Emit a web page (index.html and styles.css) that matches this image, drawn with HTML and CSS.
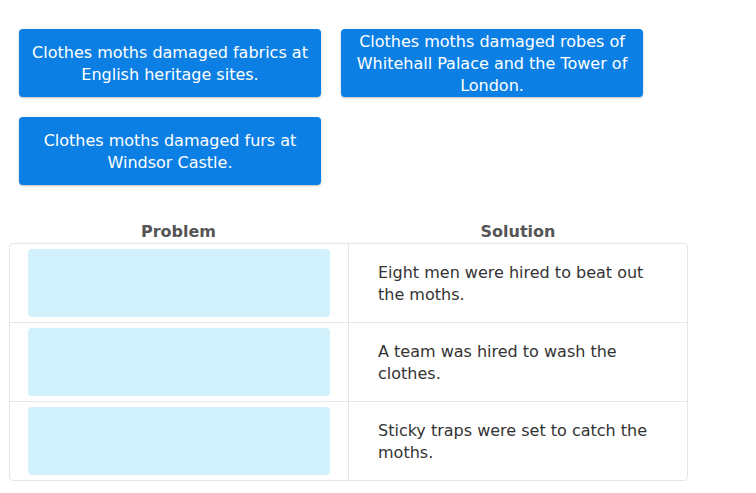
FILE: index.html
```html
<!DOCTYPE html>
<html lang="en">
<head>
<meta charset="utf-8">
<title>Problem and Solution</title>
<link rel="stylesheet" href="styles.css">
</head>
<body>
<div class="page">
  <div class="bank">
    <div class="tile">Clothes moths damaged fabrics at English heritage sites.</div>
    <div class="tile">Clothes moths damaged robes of Whitehall Palace and the Tower of London.</div>
    <div class="tile">Clothes moths damaged furs at Windsor Castle.</div>
  </div>
  <div class="board">
    <div class="heads">
      <div class="head">Problem</div>
      <div class="head">Solution</div>
    </div>
    <div class="table">
      <div class="row">
        <div class="cell drop-cell"><div class="drop"></div></div>
        <div class="cell sol">Eight men were hired to beat out the moths.</div>
      </div>
      <div class="row">
        <div class="cell drop-cell"><div class="drop"></div></div>
        <div class="cell sol">A team was hired to wash the clothes.</div>
      </div>
      <div class="row">
        <div class="cell drop-cell"><div class="drop"></div></div>
        <div class="cell sol">Sticky traps were set to catch the moths.</div>
      </div>
    </div>
  </div>
</div>
</body>
</html>
```

FILE: styles.css
```css
* { box-sizing: border-box; }
html, body { margin: 0; padding: 0; background: #fff; }
body {
  font-family: "DejaVu Sans", "Liberation Sans", sans-serif;
  font-size: 16px;
  line-height: 22px;
  color: #333;
}
.page { padding: 29px 0 0 0; }
.bank {
  display: flex;
  flex-wrap: wrap;
  gap: 20px;
  padding-left: 19px;
  width: 740px;
}
.tile {
  width: 302px;
  height: 68px;
  background: #0b7fe4;
  color: #fff;
  border-radius: 4px;
  box-shadow: 0 1px 2px rgba(0, 0, 0, 0.25);
  display: flex;
  align-items: center;
  justify-content: center;
  text-align: center;
  padding: 2px 8px 0 8px;
}
.board {
  margin: 36px 0 0 9px;
  width: 679px;
}
.heads {
  display: grid;
  grid-template-columns: 339px 340px;
}
.head {
  text-align: center;
  font-weight: bold;
  color: #555;
}
.table {
  border: 1px solid #e6e6e6;
  border-radius: 4px;
}
.row {
  display: grid;
  grid-template-columns: 339px 1fr;
  border-top: 1px solid #e6e6e6;
}
.row:first-child { border-top: none; }
.cell { min-height: 78px; }
.drop-cell {
  border-right: 1px solid #e6e6e6;
  padding: 5px 18px 5px 18px;
  display: flex;
  align-items: center;
}
.drop {
  width: 302px;
  height: 68px;
  background: #d1f1fd;
  border-radius: 4px;
}
.sol {
  display: flex;
  align-items: center;
  padding: 2px 30px 0 29px;
}
```
